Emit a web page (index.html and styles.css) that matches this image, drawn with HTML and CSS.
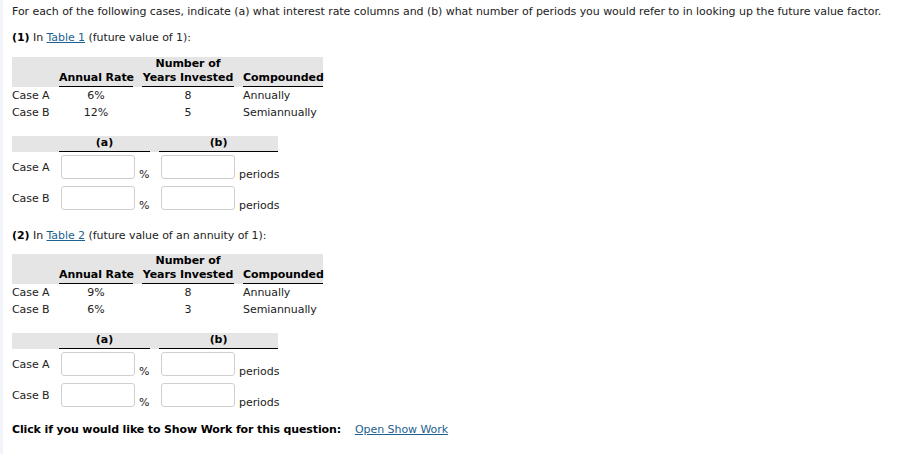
FILE: index.html
```html
<!DOCTYPE html>
<html lang="en">
<head>
<meta charset="utf-8">
<title>Future value factor</title>
<link rel="stylesheet" href="styles.css">
</head>
<body>
<div class="page">
  <p class="intro">For each of the following cases, indicate (a) what interest rate columns and (b) what number of periods you would refer to in looking up the future value factor.</p>

  <p class="part"><b>(1)</b> In <a href="#" class="link">Table 1</a> (future value of 1):</p>

  <div class="given">
    <div class="row head">
      <div></div>
      <div class="hcell center">Annual Rate</div>
      <div class="hcell center">Number of<br>Years Invested</div>
      <div class="hcell">Compounded</div>
    </div>
    <div class="row data">
      <div>Case A</div><div class="center">6%</div><div class="center">8</div><div>Annually</div>
    </div>
    <div class="row data">
      <div>Case B</div><div class="center">12%</div><div class="center">5</div><div>Semiannually</div>
    </div>
  </div>

  <div class="answers">
    <div class="arow head">
      <div></div>
      <div class="hcell center">(a)</div>
      <div class="hcell center">(b)</div>
    </div>
    <div class="arow entry">
      <div class="case">Case A</div>
      <div class="field"><input type="text" class="box"><span class="unit">%</span></div>
      <div class="field"><input type="text" class="box"><span class="unit">periods</span></div>
    </div>
    <div class="arow entry">
      <div class="case">Case B</div>
      <div class="field"><input type="text" class="box"><span class="unit">%</span></div>
      <div class="field"><input type="text" class="box"><span class="unit">periods</span></div>
    </div>
  </div>

  <p class="part part2"><b>(2)</b> In <a href="#" class="link">Table 2</a> (future value of an annuity of 1):</p>

  <div class="given">
    <div class="row head">
      <div></div>
      <div class="hcell center">Annual Rate</div>
      <div class="hcell center">Number of<br>Years Invested</div>
      <div class="hcell">Compounded</div>
    </div>
    <div class="row data">
      <div>Case A</div><div class="center">9%</div><div class="center">8</div><div>Annually</div>
    </div>
    <div class="row data">
      <div>Case B</div><div class="center">6%</div><div class="center">3</div><div>Semiannually</div>
    </div>
  </div>

  <div class="answers">
    <div class="arow head">
      <div></div>
      <div class="hcell center">(a)</div>
      <div class="hcell center">(b)</div>
    </div>
    <div class="arow entry">
      <div class="case">Case A</div>
      <div class="field"><input type="text" class="box"><span class="unit">%</span></div>
      <div class="field"><input type="text" class="box"><span class="unit">periods</span></div>
    </div>
    <div class="arow entry">
      <div class="case">Case B</div>
      <div class="field"><input type="text" class="box"><span class="unit">%</span></div>
      <div class="field"><input type="text" class="box"><span class="unit">periods</span></div>
    </div>
  </div>

  <p class="showwork"><b>Click if you would like to Show Work for this question:</b><a href="#" class="link sw">Open Show Work</a></p>
</div>
</body>
</html>
```

FILE: styles.css
```css
html, body {
  margin: 0;
  padding: 0;
  background: #fff;
}
body {
  font-family: "DejaVu Sans", Verdana, sans-serif;
  font-size: 11px;
  line-height: 14px;
  letter-spacing: -0.06px;
  color: #222;
  border-left: 3px solid #f1f4f8;
  min-height: 454px;
  box-sizing: border-box;
}
.page {
  padding: 5px 0 0 9px;
}
p {
  margin: 0;
}
b {
  color: #000;
}
.intro {
  margin: 0 0 12px;
}
.part {
  margin: 0 0 12px;
}
.part2 {
  margin-top: 15px;
  margin-bottom: 11px;
}
.link {
  color: #1d5f8f;
  text-decoration: underline;
}

.given .row {
  display: grid;
  grid-template-columns: 38px 74px 92px 80px;
  column-gap: 9px;
  width: 311px;
}
.head {
  background: #e5e5e5;
}
.head .hcell {
  font-weight: bold;
  color: #000;
  align-self: end;
  border-bottom: 1px solid #000;
  padding-bottom: 1px;
  white-space: nowrap;
}
.given .head {
  align-items: end;
}
.given .data {
  line-height: 17px;
}
.center {
  text-align: center;
}

.answers {
  margin-top: 15px;
}
.arow {
  display: grid;
  grid-template-columns: 38px 91px 119px;
  column-gap: 9px;
  width: 266px;
}
.entry {
  height: 31px;
}
.case {
  align-self: center;
}
.field {
  display: flex;
  align-items: flex-end;
  padding-bottom: 1px;
}
.box {
  box-sizing: border-box;
  width: 74px;
  height: 24px;
  margin: 3px 0 3px 2px;
  border: 1px solid #cfcfcf;
  border-radius: 3px;
  background: #fff;
  padding: 0;
  font: inherit;
}
.unit {
  margin-left: 4px;
  line-height: 14px;
}
.showwork {
  margin-top: 12px;
}
.showwork b {
  letter-spacing: -0.13px;
}
.sw {
  margin-left: 14px;
}
```
